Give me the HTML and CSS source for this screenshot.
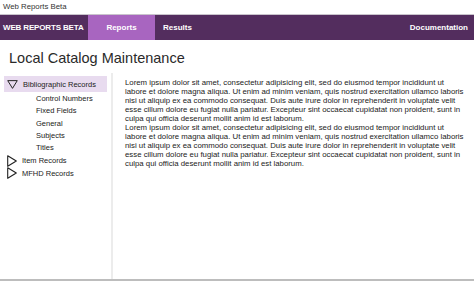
FILE: index.html
```html
<!DOCTYPE html>
<html>
<head>
<meta charset="utf-8">
<link rel="stylesheet" href="styles.css">
</head>
<body>
<div class="window">
  <div class="titlebar">Web Reports Beta</div>
  <nav class="nav">
    <div class="brand">WEB REPORTS BETA</div>
    <div class="tab active">Reports</div>
    <div class="tab">Results</div>
    <div class="spacer"></div>
    <div class="tab doc">Documentation</div>
  </nav>
  <h1 class="heading">Local Catalog Maintenance</h1>
  <div class="main">
    <aside class="sidebar">
      <div class="group open">
        <svg class="tri" viewBox="0 0 12 10" width="12" height="10"><polygon points="0.7,0.7 11.3,0.7 6,9.3" fill="none" stroke="#222" stroke-width="1.1" stroke-linejoin="round"/></svg>
        <span>Bibliographic Records</span>
      </div>
      <div class="sub">Control Numbers</div>
      <div class="sub">Fixed Fields</div>
      <div class="sub">General</div>
      <div class="sub">Subjects</div>
      <div class="sub">Titles</div>
      <div class="group">
        <svg class="tri" viewBox="0 0 10 12" width="10" height="12"><polygon points="0.7,0.7 9.3,6 0.7,11.3" fill="none" stroke="#222" stroke-width="1.1" stroke-linejoin="round"/></svg>
        <span>Item Records</span>
      </div>
      <div class="group">
        <svg class="tri" viewBox="0 0 10 12" width="10" height="12"><polygon points="0.7,0.7 9.3,6 0.7,11.3" fill="none" stroke="#222" stroke-width="1.1" stroke-linejoin="round"/></svg>
        <span>MFHD Records</span>
      </div>
    </aside>
    <section class="content">
      <p>Lorem ipsum dolor sit amet, consectetur adipisicing elit, sed do eiusmod tempor incididunt ut<br>labore et dolore magna aliqua. Ut enim ad minim veniam, quis nostrud exercitation ullamco laboris<br>nisi ut aliquip ex ea commodo consequat. Duis aute irure dolor in reprehenderit in voluptate velit<br>esse cillum dolore eu fugiat nulla pariatur. Excepteur sint occaecat cupidatat non proident, sunt in<br>culpa qui officia deserunt mollit anim id est laborum.</p>
      <p>Lorem ipsum dolor sit amet, consectetur adipisicing elit, sed do eiusmod tempor incididunt ut<br>labore et dolore magna aliqua. Ut enim ad minim veniam, quis nostrud exercitation ullamco laboris<br>nisi ut aliquip ex ea commodo consequat. Duis aute irure dolor in reprehenderit in voluptate velit<br>esse cillum dolore eu fugiat nulla pariatur. Excepteur sint occaecat cupidatat non proident, sunt in<br>culpa qui officia deserunt mollit anim id est laborum.</p>
    </section>
  </div>
  <div class="footer"></div>
</div>
</body>
</html>
```
FILE: styles.css
```css
* { box-sizing: border-box; }
html, body { margin: 0; padding: 0; background: #fff; }
body {
  font-family: "Liberation Sans", Arial, sans-serif;
  color: #222;
  width: 474px;
  height: 295px;
  overflow: hidden;
}
.window { display: flex; flex-direction: column; height: 295px; }
.titlebar {
  height: 15px;
  padding: 2px 3px 0;
  font-size: 7.8px;
  line-height: 10px;
  color: #333;
  border-bottom: 1px solid #c9c4cc;
}
.nav {
  display: flex;
  align-items: stretch;
  height: 25px;
  background: #532d5e;
  color: #fff;
  font-size: 8px;
  font-weight: bold;
}
.brand {
  display: flex; align-items: center;
  padding: 0 0 0 3px;
  width: 88px;
  letter-spacing: -0.15px;
}
.tab {
  display: flex; align-items: center; justify-content: center;
  padding: 0 8px;
}
.tab.active { background: #a865c0; width: 67px; }
.spacer { flex: 1; }
.tab.doc { padding: 0 6px 0 0; }
.heading {
  margin: 0;
  padding: 10px 0 0 9px;
  height: 33px;
  font-size: 14.5px;
  font-weight: normal;
  color: #2a2a2a;
}
.main { display: flex; height: 206px; }
.sidebar {
  width: 113px;
  padding: 3px 0 0 4px;
  border-right: 2px solid #ececec;
  font-size: 7.5px;
}
.group {
  display: flex; align-items: center;
  height: 12.5px;
  padding-left: 3px;
}
.group.open {
  height: 16px;
  background: #e8dbef;
  margin-right: 4px;
  margin-bottom: 1px;
}
.group .tri { margin-right: 5px; flex: none; }
.group.open .tri { margin-right: 5px; width: 11px; height: 9px; }
.sub { height: 12.3px; line-height: 12.3px; padding-left: 32px; }
.content {
  flex: 1;
  padding: 5px 6px 0 12px;
  font-size: 7.8px;
  line-height: 9px;
  color: #222;
}
.content p { margin: 0; white-space: nowrap; }
.footer { border-top: 2px solid #bdbdbd; flex: 1; }
```
